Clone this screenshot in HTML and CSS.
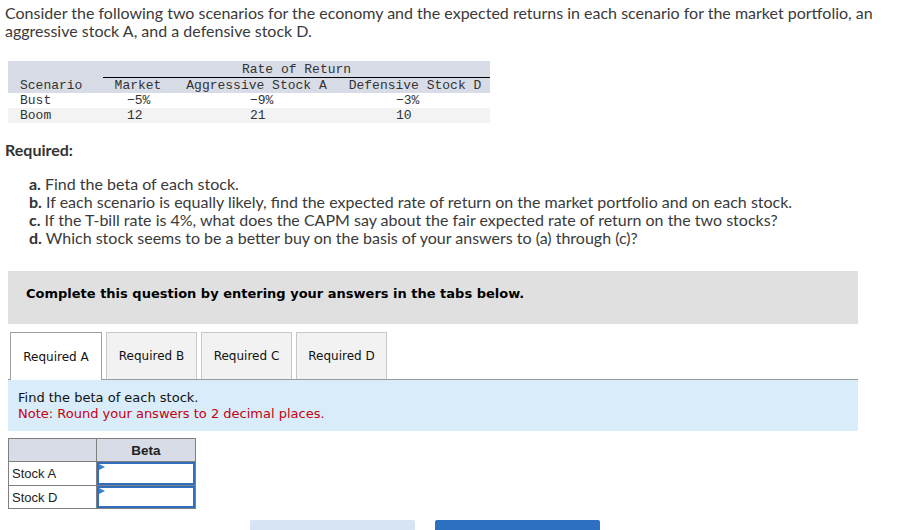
FILE: index.html
```html
<!DOCTYPE html>
<html>
<head>
<meta charset="utf-8">
<link rel="stylesheet" href="styles.css">
</head>
<body>
<div class="page">
  <p class="intro">Consider the following two scenarios for the economy and the expected returns in each scenario for the market portfolio, an aggressive stock A, and a defensive stock D.</p>

  <table class="data">
    <colgroup><col class="c1"><col class="c2"><col class="c3"><col class="c4"></colgroup>
    <tr class="hd top">
      <td></td>
      <td colspan="3" class="ror">Rate of Return</td>
    </tr>
    <tr class="hd">
      <td class="sc">Scenario</td>
      <td class="ctr">Market</td>
      <td class="ctr">Aggressive Stock A</td>
      <td class="ctr">Defensive Stock D</td>
    </tr>
    <tr class="odd">
      <td class="sc">Bust</td>
      <td class="n2">&minus;5%</td>
      <td class="n3">&minus;9%</td>
      <td class="n4">&minus;3%</td>
    </tr>
    <tr class="even">
      <td class="sc">Boom</td>
      <td class="n2">12</td>
      <td class="n3">21</td>
      <td class="n4">10</td>
    </tr>
  </table>

  <p class="req-title">Required:</p>
  <div class="req-list">
    <div><b>a.</b> Find the beta of each stock.</div>
    <div><b>b.</b> If each scenario is equally likely, find the expected rate of return on the market portfolio and on each stock.</div>
    <div><b>c.</b> If the T-bill rate is 4%, what does the CAPM say about the fair expected rate of return on the two stocks?</div>
    <div><b>d.</b> Which stock seems to be a better buy on the basis of your answers to (a) through (c)?</div>
  </div>

  <div class="instr">Complete this question by entering your answers in the tabs below.</div>

  <div class="tabs">
    <div class="tab active">Required A</div>
    <div class="tab">Required B</div>
    <div class="tab">Required C</div>
    <div class="tab">Required D</div>
  </div>

  <div class="panel">
    <div>Find the beta of each stock.</div>
    <div class="note">Note: Round your answers to 2 decimal places.</div>
  </div>

  <table class="answer">
    <tr class="ahd"><td class="a1"></td><td class="a2">Beta</td></tr>
    <tr class="r1"><td class="lbl">Stock A</td><td class="inp"><div class="box"></div></td></tr>
    <tr class="r2"><td class="lbl">Stock D</td><td class="inp"><div class="box"></div></td></tr>
  </table>

  <div class="nav">
    <div class="btn prev"></div>
    <div class="btn next"></div>
  </div>
</div>
</body>
</html>
```

FILE: styles.css
```css
html, body {
  margin: 0;
  padding: 0;
  background: #fff;
}
.page {
  padding: 4px 0 0 0;
  color: #333;
}
.intro {
  margin: 0 0 0 5px;
  width: 890px;
  font-family: Lato, "Liberation Sans", sans-serif;
  font-size: 16px;
  line-height: 18px;
  color: #3a3a3a;
}
.data {
  margin: 21px 0 0 8px;
  border-collapse: separate;
  border-spacing: 0;
  font-family: "Liberation Mono", monospace;
  font-size: 13px;
  color: #333;
  width: 482px;
  table-layout: fixed;
}
.data td {
  padding: 0;
  height: 15px;
  line-height: 15px;
  white-space: nowrap;
}
.data .top td {
  height: 16px;
  line-height: 16px;
  padding-top: 1px;
}
.c1 { width: 95px; }
.c2 { width: 70px; }
.c3 { width: 167px; }
.c4 { width: 150px; }
.data .hd td { background: #d8dce6; }
.data .hd td.ror {
  text-align: center;
  height: 14px;
  line-height: 14px;
  border-bottom: 1px solid #000;
}
.data .ctr { text-align: center; }
.data .sc { padding-left: 12px; }
.data .odd td { background: #fff; }
.data .even td { background: #f3f3f3; }
.data .n2 { padding-left: 24px; }
.data .n3 { padding-left: 77px; }
.data .n4 { padding-left: 56px; }

.req-title {
  margin: 18px 0 0 5px;
  font-family: Lato, "Liberation Sans", sans-serif;
  font-size: 16px;
  font-weight: bold;
  line-height: 18px;
  color: #333;
}
.req-list {
  margin: 16px 0 0 29px;
  font-family: Lato, "Liberation Sans", sans-serif;
  font-size: 16px;
  line-height: 18px;
  color: #3a3a3a;
}
.req-list b { color: #333; }

.instr {
  margin: 24px 0 0 8px;
  width: 850px;
  height: 53px;
  box-sizing: border-box;
  padding: 15px 0 0 18px;
  line-height: 16px;
  background: #e0e0e0;
  font-family: "DejaVu Sans", Verdana, sans-serif;
  font-size: 13px;
  font-weight: bold;
  color: #000;
}

.tabs {
  margin: 8px 0 0 8px;
  width: 850px;
  box-sizing: border-box;
  padding-left: 2px;
  display: flex;
  gap: 4px;
  border-bottom: 1px solid #9a9a9a;
  height: 48px;
}
.tab {
  width: 91px;
  height: 47px;
  box-sizing: border-box;
  border: 1px solid #c8c8c8;
  border-bottom: none;
  background: #f2f2f2;
  display: flex;
  align-items: center;
  justify-content: center;
  font-family: "DejaVu Sans", Verdana, sans-serif;
  font-size: 12px;
  color: #111;
}
.tab.active {
  width: 92px;
  height: 48px;
  background: #fff;
  border-color: #a0a0a0;
}

.panel {
  margin: 0 0 0 8px;
  width: 850px;
  box-sizing: border-box;
  padding: 10px 10px 9px 10px;
  background: #d8ecfa;
  font-family: "DejaVu Sans", Verdana, sans-serif;
  font-size: 13px;
  line-height: 16px;
  color: #111;
}
.panel .note { color: #c4000f; }

.answer {
  margin: 7px 0 0 8px;
  border-collapse: collapse;
  font-family: "Liberation Sans", Arial, sans-serif;
  font-size: 13px;
  color: #222;
  table-layout: fixed;
}
.answer td {
  border: 1px solid #7f7f7f;
  padding: 0;
}
.answer .a1 { width: 87px; }
.answer .a2 { width: 98px; }
.answer .ahd td {
  background: #d8dce6;
  height: 22px;
  text-align: center;
  font-weight: bold;
  font-size: 13.5px;
}
.answer .r1 td { height: 23px; }
.answer .r2 td { height: 22px; }
.answer .lbl { padding-left: 3px; }
.answer .inp { position: relative; }
.answer .box {
  position: absolute;
  inset: 0;
  border: 2px solid #2f6fbd;
}
.answer .box::before {
  content: "";
  position: absolute;
  left: 0;
  top: 0;
  border-left: 6px solid #3a7fd0;
  border-top: 3px solid transparent;
  border-bottom: 3px solid transparent;
}

.nav {
  margin: 11px 0 0 250px;
  display: flex;
  gap: 20px;
}
.btn {
  width: 165px;
  height: 40px;
  border-radius: 2px;
}
.btn.prev { background: #d6e4f4; }
.btn.next { background: #2d6fc1; }
```
